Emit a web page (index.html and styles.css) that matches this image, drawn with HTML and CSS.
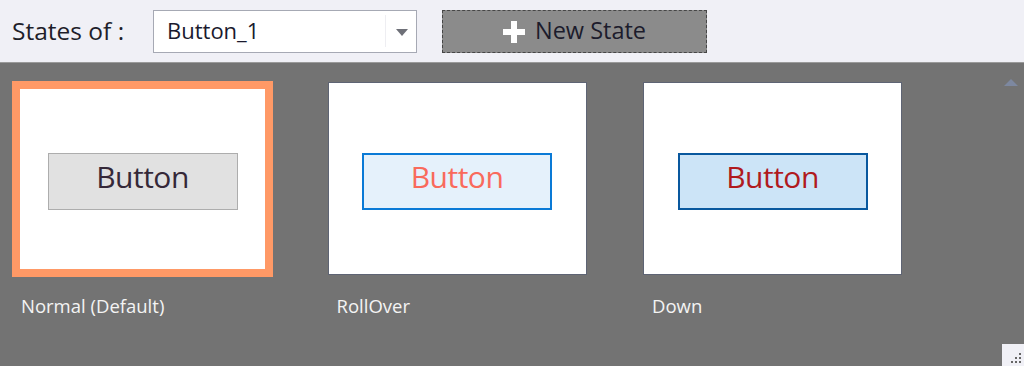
FILE: index.html
```html
<html lang="en">
<head>
    <meta charset="UTF-8">
    <title>States</title>
    <link rel="stylesheet" href="styles.css">
</head>
<body>
    <div class="toolbar">
        <span class="toolbar-label">States of :</span>
        <div class="select">
            <span class="select-value">Button_1</span>
            <span class="select-sep"></span>
            <span class="select-arrow"></span>
        </div>
        <div class="new-state">
            <svg class="plus" width="22" height="22" viewBox="0 0 22 22">
                <rect x="8" y="0" width="6" height="22" fill="#fff"/>
                <rect x="0" y="8" width="22" height="6" fill="#fff"/>
            </svg>
            <span>New State</span>
        </div>
    </div>
    <div class="panel">
        <div class="state">
            <div class="thumb selected">
                <div class="btn btn-normal">Button</div>
            </div>
            <div class="state-name">Normal (Default)</div>
        </div>
        <div class="state">
            <div class="thumb">
                <div class="btn btn-over">Button</div>
            </div>
            <div class="state-name">RollOver</div>
        </div>
        <div class="state">
            <div class="thumb">
                <div class="btn btn-down">Button</div>
            </div>
            <div class="state-name">Down</div>
        </div>
        <span class="scroll-up"></span>
        <span class="grip">
            <svg width="22" height="22" viewBox="0 0 22 22">
                <rect x="17" y="9" width="2" height="2" fill="#666"/>
                <rect x="13" y="13" width="2" height="2" fill="#666"/>
                <rect x="17" y="13" width="2" height="2" fill="#666"/>
                <rect x="9" y="17" width="2" height="2" fill="#666"/>
                <rect x="13" y="17" width="2" height="2" fill="#666"/>
                <rect x="17" y="17" width="2" height="2" fill="#666"/>
            </svg>
        </span>
    </div>
</body>
</html>
```

FILE: styles.css
```css
body {
    margin: 0;
    padding: 0;
    font-family: "Open Sans", "Noto Sans", sans-serif;
    background: #737373;
    width: 1024px;
    height: 366px;
    overflow: hidden;
}
.toolbar {
    height: 63px;
    background: #f0f0f6;
    border-bottom: 1px solid #9a9a9a;
    display: flex;
    align-items: center;
    padding-left: 12px;
    box-sizing: border-box;
}
.toolbar-label {
    font-size: 24.5px;
    color: #1e1e2a;
    width: 141px;
    margin-top: -2px;
}
.select {
    width: 264px;
    height: 43px;
    box-sizing: border-box;
    background: #fff;
    border: 1px solid #a6a9b4;
    display: flex;
    align-items: center;
    padding-left: 13px;
}
.select-value {
    font-size: 22px;
    color: #1a1a2e;
    flex: 1;
    margin-top: -2px;
}
.select-sep {
    width: 1px;
    height: 32px;
    background: #eeeef2;
    margin-right: 10px;
}
.select-arrow {
    width: 0;
    height: 0;
    border-left: 6px solid transparent;
    border-right: 6px solid transparent;
    border-top: 7px solid #6e7078;
    margin-right: 8px;
    margin-top: 2px;
}
.new-state {
    margin-left: 25px;
    width: 265px;
    height: 43px;
    box-sizing: border-box;
    background: #8b8b8b;
    border: 1px dashed #464646;
    display: flex;
    align-items: center;
    justify-content: center;
    gap: 10px;
    font-size: 23.5px;
    color: #1c1c2c;
}
.new-state span {
    margin-top: -2px;
}
.plus {
    margin-top: 2px;
}
.panel {
    position: relative;
    height: 303px;
    display: flex;
    padding: 19px 0 0 12px;
    box-sizing: border-box;
    gap: 56.5px;
}
.state {
    width: 259px;
}
.thumb {
    width: 259px;
    height: 193px;
    box-sizing: border-box;
    background: #fff;
    border: 1px solid #5e6474;
    display: flex;
    align-items: center;
    justify-content: center;
    padding-top: 5px;
}
.thumb.selected {
    width: 261px;
    height: 196px;
    margin: -1px -2px -2px 0;
    border: 8px solid #ff9966;
}
.btn {
    width: 190px;
    height: 57px;
    box-sizing: border-box;
    display: flex;
    align-items: center;
    justify-content: center;
    font-size: 30px;
    letter-spacing: -0.5px;
    padding-bottom: 10px;
}
.btn-normal {
    background: #e1e1e1;
    border: 1px solid #adadad;
    color: #352838;
}
.btn-over {
    background: #e5f1fb;
    border: 2px solid #0a7ad6;
    color: #f96a5c;
}
.btn-down {
    background: #cce4f7;
    border: 2px solid #09589e;
    color: #b01a1e;
}
.state-name {
    margin: 18px 0 0 9px;
    font-size: 18.5px;
    color: #f4f4f4;
}
.scroll-up {
    position: absolute;
    top: 16px;
    right: 6px;
    width: 0;
    height: 0;
    border-left: 7px solid transparent;
    border-right: 7px solid transparent;
    border-bottom: 7px solid #7d88a0;
}
.grip {
    position: absolute;
    right: 0;
    bottom: 0;
    width: 22px;
    height: 22px;
    background: #f0f0f6;
}
```
